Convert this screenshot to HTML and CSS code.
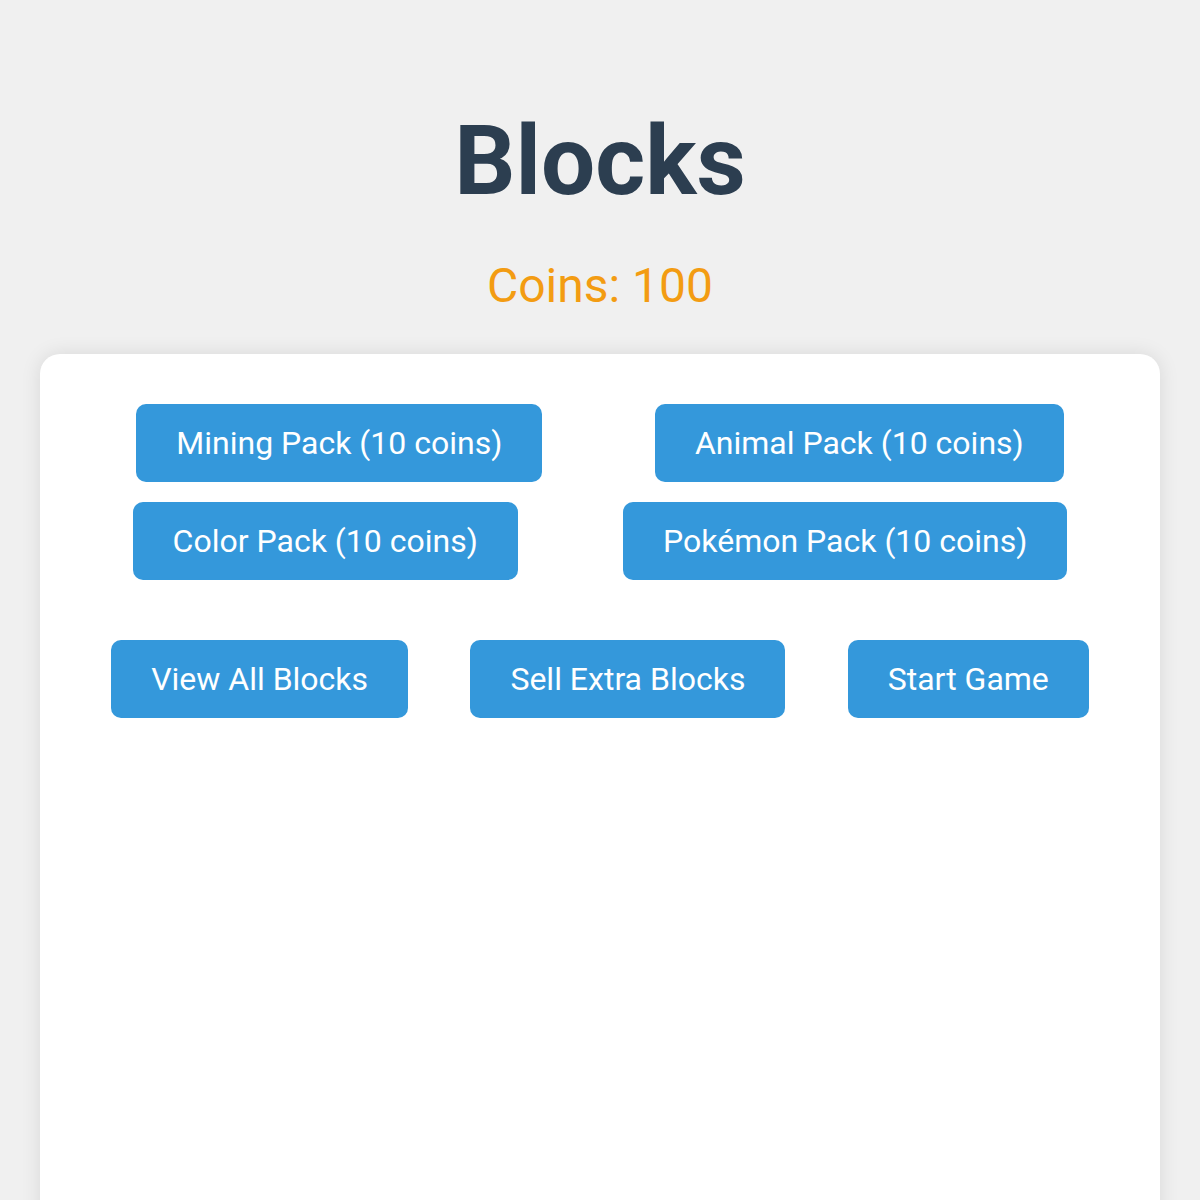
FILE: index.html
```html
<!DOCTYPE html>
<html lang="en">
<head>
    <meta charset="UTF-8">
    <meta name="viewport" content="width=device-width, initial-scale=1.0">
    <title>Blocks</title>
    <link rel="stylesheet" href="styles.css">
</head>
<body>
    <h1 class="title">Blocks</h1>
    <p class="coins">Coins: <span id="coinCount">100</span></p>

    <div class="panel">
        <div class="pack-list">
            <button class="btn">Mining Pack (10 coins)</button>
            <button class="btn">Animal Pack (10 coins)</button>
            <button class="btn">Color Pack (10 coins)</button>
            <button class="btn">Pokémon Pack (10 coins)</button>
        </div>

        <div class="actions">
            <button class="btn">View All Blocks</button>
            <button class="btn">Sell Extra Blocks</button>
            <button class="btn">Start Game</button>
        </div>
    </div>
</body>
</html>
```

FILE: styles.css
```css
body {
    margin: 0;
    padding: 105px 40px 0;
    background-color: #f0f0f0;
    font-family: Roboto, "Liberation Sans", Arial, sans-serif;
    text-align: center;
}
.title {
    margin: 0;
    font-size: 96px;
    font-weight: 700;
    line-height: normal;
    color: #2c3e50;
}
.coins {
    margin: 40px 0 0;
    font-size: 48px;
    line-height: normal;
    color: #f39c12;
}
.panel {
    margin-top: 40px;
    padding: 40px;
    min-height: 900px;
    background-color: #fff;
    border-radius: 20px;
    box-shadow: 0 0 20px rgba(0, 0, 0, 0.1);
}
.pack-list,
.actions {
    display: flex;
    flex-wrap: wrap;
    justify-content: space-around;
}
.pack-list {
    margin-bottom: 40px;
}
.btn {
    margin: 10px;
    padding: 20px 40px;
    font-family: inherit;
    font-size: 32px;
    line-height: normal;
    color: #fff;
    background-color: #3498db;
    border: none;
    border-radius: 10px;
    cursor: pointer;
}
.btn:hover {
    background-color: #2980b9;
}
```
